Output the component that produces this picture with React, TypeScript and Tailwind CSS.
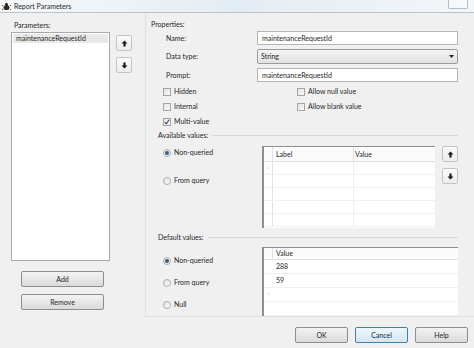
import React from 'react';

const font = "font-['Lato',_'Noto_Sans',_sans-serif]";

const Arrow: React.FC<{ down?: boolean }> = ({ down }) => (
  <svg width="7" height="7" viewBox="0 0 7 7" className={down ? 'rotate-180' : ''}>
    <path d="M3.5 0.5 L6.5 3.5 L4.6 3.5 L4.6 6.5 L2.4 6.5 L2.4 3.5 L0.5 3.5 Z" fill="#1a1a1a" />
  </svg>
);

const SmallButton: React.FC<{ down?: boolean }> = ({ down }) => (
  <div className="w-[16px] h-[16px] flex items-center justify-center bg-gradient-to-b from-[#fbfbfb] to-[#ececec] border border-[#c4c4c4] rounded-[2px]">
    <Arrow down={down} />
  </div>
);

const Checkbox: React.FC<{ label: string; checked?: boolean }> = ({ label, checked }) => (
  <div className="flex items-center h-[15px] gap-[3px]">
    <div className="w-[8px] h-[8px] border border-[#a4a4a4] bg-gradient-to-br from-[#e2e2e2] to-[#fafafa] flex items-center justify-center">
      {checked && (
        <svg width="6" height="6" viewBox="0 0 6 6">
          <path d="M0.8 3.2 L2.3 4.8 L5.2 0.8" stroke="#3a4a6a" strokeWidth="1.1" fill="none" />
        </svg>
      )}
    </div>
    <span>{label}</span>
  </div>
);

const Radio: React.FC<{ label: string; checked?: boolean }> = ({ label, checked }) => (
  <div className="flex items-center h-[11px] gap-[3px]">
    <div className="w-[8px] h-[8px] rounded-full border border-[#acacac] bg-gradient-to-br from-[#e4e4e4] to-[#fbfbfb] flex items-center justify-center">
      {checked && <div className="w-[4px] h-[4px] rounded-full bg-[#3d5a80]" />}
    </div>
    <span>{label}</span>
  </div>
);

const DlgButton: React.FC<{ label: string; focused?: boolean; className?: string }> = ({ label, focused, className }) => (
  <div
    className={`h-[16px] flex items-center justify-center rounded-[2px] border bg-gradient-to-b ${
      focused ? 'border-[#3c7fb1] from-[#eef6fb] to-[#d6e6f1]' : 'border-[#8e8e8e] from-[#f3f3f3] to-[#dadada]'
    } ${className ?? ''}`}
  >
    {label}
  </div>
);

const SectionLabel: React.FC<{ label: string; className?: string }> = ({ label, className }) => (
  <div className={`flex items-center h-[9px] pl-[12px] pr-[16px] ${className ?? ''}`}>
    <span className="mr-[4px]">{label}</span>
    <div className="flex-1 h-px bg-[#d8d8d8]" />
  </div>
);

export default function App() {
  return (
    <div className={`w-[474px] h-[348px] bg-[#f0f0f0] flex flex-col overflow-hidden text-[7px] leading-[9px] text-[#262626] ${font}`}>
      {/* title bar */}
      <div className="h-[13px] flex items-center border-b border-[#b9c3cc] bg-gradient-to-r from-[#f6f9fb] via-[#e4ecf3] to-[#f3f6f9] relative">
        <svg width="9" height="9" viewBox="0 0 9 9" className="ml-[2px]">
          <ellipse cx="4.5" cy="5.5" rx="3" ry="2.6" fill="#3a2a1a" />
          <circle cx="4.5" cy="2.5" r="1.4" fill="#1a1a1a" />
          <path d="M1 4 L0 3 M8 4 L9 3 M1 7 L0 8 M8 7 L9 8" stroke="#2a2a2a" strokeWidth="0.8" />
        </svg>
        <span className="ml-[3px] text-[7px]">Report Parameters</span>
        <div className="absolute right-[6px] top-0 w-[20px] h-[9px] border border-t-0 border-[#b4bec8] rounded-b-[2px] bg-[#f6f8fa]" />
      </div>

      <div className="flex h-[304px]">
        {/* left column */}
        <div className="w-[145px] pt-[8px] pl-[11px] flex flex-col">
          <div className="pl-[3px] h-[9px]">Parameters:</div>
          <div className="flex mt-[2px]">
            <div className="w-[99px] h-[229px] bg-white border border-[#a9a9a9] p-px">
              <div className="h-[9px] bg-[#e8e8e8] pl-[3px]">maintenanceRequestId</div>
            </div>
            <div className="ml-[6px] mt-[3px] flex flex-col gap-[6px]">
              <SmallButton />
              <SmallButton down />
            </div>
          </div>
          <div className="ml-[10px] mt-[10px] flex flex-col gap-[7px] w-[83px]">
            <DlgButton label="Add" className="h-[14px]" />
            <DlgButton label="Remove" className="h-[14px]" />
          </div>
        </div>

        {/* right panel */}
        <div className="flex-1 border-l border-b border-[#e0e0e0] pt-[7px] flex flex-col">
          <div className="pl-[5px] h-[9px]">Properties:</div>
          <div className="grid grid-cols-[91px_201px] pl-[20px] mt-[2px] items-center gap-y-[4px]">
            <span>Name:</span>
            <div className="h-[14px] bg-white border border-[#b5b5b5] flex items-center pl-[4px]">maintenanceRequestId</div>
            <span>Data type:</span>
            <div className="h-[15px] border border-[#9a9a9a] rounded-[2px] bg-gradient-to-b from-[#f4f4f4] to-[#e2e2e2] flex items-center pl-[3px] pr-[3px]">
              <span className="flex-1">String</span>
              <svg width="5" height="3" viewBox="0 0 5 3"><path d="M0 0 H5 L2.5 3 Z" fill="#222" /></svg>
            </div>
            <span>Prompt:</span>
            <div className="h-[14px] bg-white border border-[#b5b5b5] flex items-center pl-[4px]">maintenanceRequestId</div>
          </div>
          <div className="grid grid-cols-[134px_1fr] pl-[17px] mt-[2px]">
            <Checkbox label="Hidden" />
            <Checkbox label="Allow null value" />
            <Checkbox label="Internal" />
            <Checkbox label="Allow blank value" />
            <Checkbox label="Multi-value" checked />
          </div>

          <SectionLabel label="Available values:" className="mt-[2px]" />
          <div className="flex mt-[6px] pl-[17px]">
            <div className="w-[99px] flex flex-col gap-[17px] pt-[1px]">
              <Radio label="Non-queried" checked />
              <Radio label="From query" />
            </div>
            <div className="w-[173px] h-[82px] bg-white border-l-2 border-t border-[#8f8f8f] flex flex-col">
              <div className="flex h-[15px] border-b border-[#e2e2e2] bg-[#fbfbfb]">
                <div className="w-[9px] border-r border-[#e2e2e2]" />
                <div className="w-[81px] border-r border-[#e2e2e2] pl-[3px] flex items-center">Label</div>
                <div className="flex-1 pl-[1px] flex items-center">Value</div>
              </div>
              {[0, 1, 2, 3, 4].map((i) => (
                <div key={i} className="flex h-[13px] border-b border-[#f0f0f0]">
                  <div className="w-[9px] border-r border-[#e2e2e2] text-[#b0b0b0] text-[6px] flex items-center justify-center">
                    {i === 0 ? '*' : ''}
                  </div>
                  <div className="w-[81px] border-r border-[#f0f0f0]" />
                  <div className="flex-1" />
                </div>
              ))}
            </div>
            <div className="ml-[7px] flex flex-col gap-[6px]">
              <SmallButton />
              <SmallButton down />
            </div>
          </div>

          <SectionLabel label="Default values:" className="mt-[5px]" />
          <div className="flex mt-[5px] pl-[17px] flex-1 min-h-0">
            <div className="w-[99px] flex flex-col gap-[11px] pt-[8px]">
              <Radio label="Non-queried" checked />
              <Radio label="From query" />
              <Radio label="Null" />
            </div>
            <div className="w-[196px] bg-white border-l-2 border-t border-[#8f8f8f] flex flex-col overflow-hidden">
              <div className="flex h-[15px] border-b border-[#e2e2e2] bg-[#fbfbfb]">
                <div className="w-[9px] border-r border-[#e2e2e2]" />
                <div className="flex-1 pl-[3px] flex items-center">Value</div>
              </div>
              {['288', '59', '', ''].map((v, i) => (
                <div key={i} className="flex h-[14px] border-b border-[#f0f0f0] shrink-0">
                  <div className="w-[9px] text-[#b0b0b0] text-[6px] flex items-center justify-center">
                    {i === 2 ? '*' : ''}
                  </div>
                  <div className="flex-1 pl-[3px] flex items-center">{v}</div>
                </div>
              ))}
            </div>
          </div>
        </div>
      </div>

      {/* dialog buttons */}
      <div className="flex justify-end gap-[7px] pr-[6px] pt-[10px]">
        <DlgButton label="OK" className="w-[53px]" />
        <DlgButton label="Cancel" focused className="w-[53px]" />
        <DlgButton label="Help" className="w-[53px]" />
      </div>
    </div>
  );
}
